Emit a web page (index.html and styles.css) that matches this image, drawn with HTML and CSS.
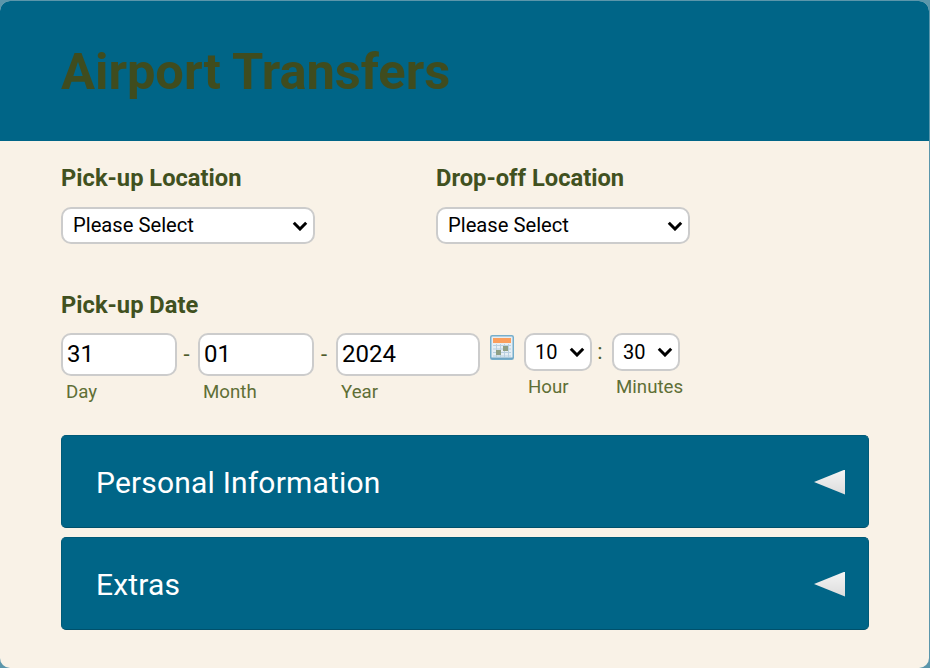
FILE: index.html
```html
<!DOCTYPE html>
<html>
    <head>
        <title>Airport Transfers</title>
        <link rel="stylesheet" href="styles.css">
    </head>
    <body>
        <div class="form">
            <div class="header">
                <h1>Airport Transfers</h1>
            </div>
            <div class="content">
                <div class="locations">
                    <div class="location">
                        <label>Pick-up Location</label>
                        <select class="bigSelect"><option>Please Select</option></select>
                    </div>
                    <div class="location">
                        <label>Drop-off Location</label>
                        <select class="bigSelect"><option>Please Select</option></select>
                    </div>
                </div>

                <label class="dateLabel">Pick-up Date</label>
                <div class="dateRow">
                    <div class="field">
                        <input class="dateInput" type="text" value="31">
                        <span class="sub">Day</span>
                    </div>
                    <span class="sep dash">-</span>
                    <div class="field">
                        <input class="dateInput" type="text" value="01">
                        <span class="sub">Month</span>
                    </div>
                    <span class="sep dash dash2">-</span>
                    <div class="field">
                        <input class="dateInput year" type="text" value="2024">
                        <span class="sub">Year</span>
                    </div>
                    <svg class="calendar" width="24" height="25" viewBox="0 0 24 25">
                        <rect x="0.75" y="0.75" width="22.5" height="23.5" rx="1.5" fill="#e6eef4" stroke="#76aecb" stroke-width="1.5"/>
                        <rect x="3" y="3" width="18" height="5" fill="#fb9e5c"/>
                        <path d="M3 10.5h18M3 14h18M3 17.5h18M3 21h18M6.5 9v13M10.5 9v13M14.5 9v13M18.5 9v13" stroke="#b9d0e0" stroke-width="1"/>
                        <rect x="6" y="15" width="5" height="5" fill="#8f9f85"/>
                        <rect x="13" y="11" width="5" height="5" fill="#8f9f85"/>
                        <rect x="1" y="22.5" width="22" height="1.5" fill="#6fa5c4"/>
                    </svg>
                    <div class="field timeField">
                        <select class="timeSelect"><option>10</option></select>
                        <span class="sub">Hour</span>
                    </div>
                    <span class="sep colon">:</span>
                    <div class="field timeField">
                        <select class="timeSelect"><option>30</option></select>
                        <span class="sub">Minutes</span>
                    </div>
                </div>

                <div class="bar">
                    <span>Personal Information</span>
                    <div class="arrow"></div>
                </div>
                <div class="bar">
                    <span>Extras</span>
                    <div class="arrow"></div>
                </div>
            </div>
        </div>
    </body>
</html>
```

FILE: styles.css
```css
*{
    margin: 0;
    padding: 0;
    box-sizing: border-box;
}
html, body{
    height: 100%;
}
body{
    background-color: #5b96ab;
    font-family: Roboto, sans-serif;
    overflow: hidden;
}

.form{
    width: 929px;
    height: 667px;
    margin-top: 1px;
    background-color: #f9f2e7;
    border-radius: 10px;
    overflow: hidden;
}
.header{
    height: 140px;
    padding: 40px 61px 0;
    background-color: #006587;
}
.header h1{
    font-size: 50.6px;
    line-height: 61px;
    font-weight: 700;
    color: #3f4c1e;
}

.content{
    padding: 24px 60px 0 61px;
}
label{
    display: block;
    font-size: 23.7px;
    line-height: 27px;
    font-weight: 700;
    color: #41511f;
}
select, input{
    font-family: Roboto, sans-serif;
    color: #000;
    background-color: #fff;
    border: 2px solid #ccc;
    border-radius: 10px;
    outline: none;
}
select{
    appearance: none;
    background-image: url("data:image/svg+xml,%3Csvg xmlns='http://www.w3.org/2000/svg' width='16' height='10' viewBox='0 0 16 10'%3E%3Cpath d='M1.8 1.8 8 8l6.2-6.2' fill='none' stroke='%23000' stroke-width='3'/%3E%3C/svg%3E");
    background-repeat: no-repeat;
    background-position: right 5px center;
}

.locations{
    display: flex;
    gap: 121.5px;
}
.bigSelect{
    display: block;
    width: 253.5px;
    height: 37px;
    margin-top: 15px;
    padding: 0 0 2px 10px;
    font-size: 20.2px;
}

.dateLabel{
    margin-top: 48px;
}
.dateRow{
    display: flex;
    align-items: flex-start;
    margin-top: 14px;
    height: 102px;
}
.field{
    display: flex;
    flex-direction: column;
}
.dateInput{
    width: 116px;
    height: 43px;
    padding: 0 0 2px 4px;
    font-size: 24px;
}
.year{
    width: 144px;
}
.sub{
    margin-top: 5px;
    padding-left: 5px;
    font-size: 18.7px;
    line-height: 22px;
    color: #5f6f36;
    white-space: nowrap;
}
.timeField .sub{
    padding-left: 4px;
}
.sep{
    font-size: 22px;
    line-height: 43px;
    color: #4d5b2a;
    padding-right: 2px;
    text-align: center;
}
.dash{
    width: 21px;
}
.dash2{
    width: 22px;
}
.colon{
    width: 20px;
    line-height: 38px;
    padding-right: 4px;
}
.calendar{
    margin: 2px 10px 0;
    flex-shrink: 0;
}
.timeSelect{
    width: 68px;
    height: 38px;
    padding-left: 9px;
    font-size: 20px;
}

.bar{
    display: flex;
    align-items: center;
    justify-content: space-between;
    height: 93px;
    margin-bottom: 9px;
    padding: 1px 23px 0 34px;
    background-color: #006587;
    border: 1px solid #005a78;
    border-bottom-color: #00506b;
    border-radius: 5px;
    font-size: 30px;
    letter-spacing: 0.18px;
    color: #fff;
}
.arrow{
    width: 31px;
    height: 25px;
    background: linear-gradient(#f4f4f4, #dcdcdc);
    clip-path: polygon(0 50%, 100% 0, 100% 100%);
}
```
